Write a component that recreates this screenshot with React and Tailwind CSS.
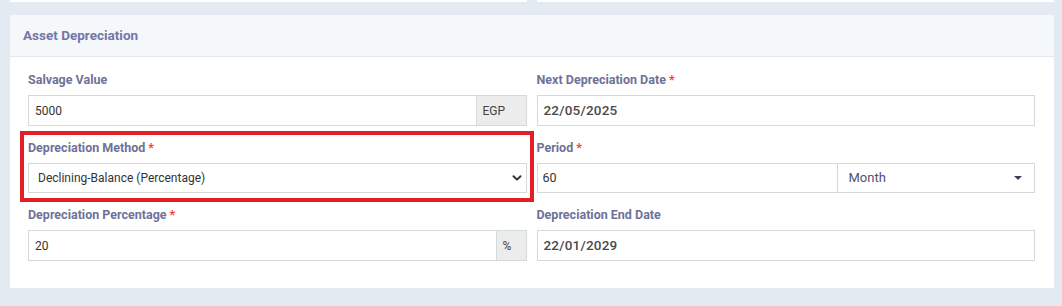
import React from "react";

const LABEL = "block h-[20px] leading-[20px] text-[12.5px] font-bold text-[#6e7298] mb-[5px]";
const BOX = "flex h-[31px] border border-[#d3dadb] bg-white";

function Star() {
    return <span className="text-[#ff3b3b] ml-[3px]">*</span>;
}

function Field({ label, required, children }) {
    return (
        <div>
            <label className={LABEL}>
                {label}
                {required && <Star />}
            </label>
            {children}
        </div>
    );
}

function AddonInput({ value, addon, addonWidth }) {
    return (
        <div className={BOX}>
            <div className="flex-1 flex items-center pl-[6px] text-[12px] text-[#333]">{value}</div>
            <div className={`${addonWidth} flex items-center pl-[6px] border-l border-[#d3dadb] bg-[#ececec] text-[12px] text-[#444]`}>
                {addon}
            </div>
        </div>
    );
}

function DateInput({ value }) {
    return (
        <div className={`${BOX} items-center pl-[6px] text-[13.5px] font-medium text-[#4a4a4a] tracking-[0.2px]`}>
            {value}
        </div>
    );
}

export default function App() {
    return (
        <div className="w-[1062px] h-[306px] bg-[#e4eaf2] pl-[10px] pr-[8px] overflow-hidden" style={{ fontFamily: "Roboto, 'Liberation Sans', sans-serif" }}>
            {/* bottom edge of the panels above */}
            <div className="flex gap-[10px]">
                <div className="flex-1 h-[2px] bg-white" />
                <div className="flex-1 h-[2px] bg-white" />
            </div>

            <div className="mt-[13px] bg-white">
                <div className="h-[42px] flex items-center pl-[13px] bg-[#f5f8fb] border-b border-[#e2e8ec] text-[13.5px] font-bold text-[#7276a6]">
                    Asset Depreciation
                </div>

                <div className="relative grid grid-cols-2 gap-x-[10px] gap-y-[12px] pl-[18px] pr-[19px] pt-[13px] pb-[27px]">
                    <Field label="Salvage Value">
                        <AddonInput value="5000" addon="EGP" addonWidth="w-[50px]" />
                    </Field>
                    <Field label="Next Depreciation Date" required>
                        <DateInput value="22/05/2025" />
                    </Field>

                    <Field label="Depreciation Method" required>
                        <div className="flex h-[30px] border border-[#d3dadb] bg-white items-center pl-[9px] pr-[4px] text-[12px] text-[#333]">
                            <span className="flex-1">Declining-Balance (Percentage)</span>
                            <svg width="10" height="8" viewBox="0 0 10 8" className="text-[#333]">
                                <path d="M1.5 2.2 L5 5.6 L8.5 2.2" fill="none" stroke="currentColor" strokeWidth="2" strokeLinecap="round" strokeLinejoin="round" />
                            </svg>
                        </div>
                    </Field>
                    <Field label="Period" required>
                        <div className="flex h-[30px] border border-[#d3dadb] bg-white">
                            <div className="w-[300px] flex items-center pl-[5px] text-[12.5px] text-[#333] border-r border-[#d3dadb]">60</div>
                            <div className="flex-1 flex items-center pl-[11px] pr-[12px] text-[13px] text-[#4f5175]">
                                <span className="flex-1">Month</span>
                                <svg width="8" height="4" viewBox="0 0 8 4">
                                    <path d="M0 0 H8 L4 4 Z" fill="#3d3f5c" />
                                </svg>
                            </div>
                        </div>
                    </Field>

                    <Field label="Depreciation Percentage" required>
                        <AddonInput value="20" addon="%" addonWidth="w-[30px]" />
                    </Field>
                    <Field label="Depreciation End Date">
                        <DateInput value="22/01/2029" />
                    </Field>

                    {/* highlight annotation */}
                    <div className="absolute left-[10px] top-[74px] w-[514px] h-[71px] border-4 border-[#e41e26] pointer-events-none" />
                </div>
            </div>
        </div>
    );
}
